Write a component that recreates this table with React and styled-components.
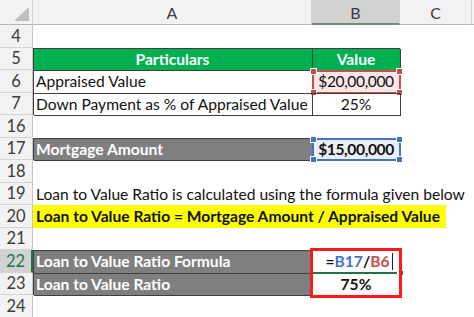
import React from 'react';
import styled, { createGlobalStyle, css } from 'styled-components';

const GlobalStyle = createGlobalStyle`
  html, body { margin: 0; padding: 0; background: #fff; }
  body { font-family: "Lato", "Open Sans", sans-serif; overflow: hidden; }
`;

const COLORS = {
  green: '#00b050',
  gray: '#7f7f7f',
  yellow: '#ffff00',
  border: '#3f3f3f',
  hdrBg: '#f2f2f2',
  hdrLine: '#d4d4d4',
  hdrSel: '#d2d2d2',
  excelGreen: '#217346',
  red: '#c0504d',
  blue: '#4472c4',
  annot: '#ff1a1a',
};

const Sheet = styled.div`
  display: grid;
  grid-template-columns: 33px 279px 88px 72px 1fr;
  grid-template-rows: 25px repeat(13, 22.5px);
  width: 474px;
  height: 317px;
  font-size: 15.6px;
  color: #111;
  overflow: hidden;
`;

const Corner = styled.div`
  background: ${COLORS.hdrBg};
  border-right: 1px solid ${COLORS.hdrLine};
  border-bottom: 1px solid #b5b5b5;
  position: relative;
  box-sizing: border-box;
  &::after {
    content: '';
    position: absolute;
    right: 3px;
    bottom: 3px;
    width: 0;
    height: 0;
    border-left: 15px solid transparent;
    border-bottom: 14px solid #bfbfbf;
  }
`;

const ColHead = styled.div`
  display: flex;
  align-items: center;
  justify-content: center;
  box-sizing: border-box;
  background: ${(p) => (p.selected ? COLORS.hdrSel : COLORS.hdrBg)};
  border-right: 1px solid ${COLORS.hdrLine};
  border-bottom: ${(p) => (p.selected ? '2px solid #6f8a78' : '1px solid #b5b5b5')};
  color: #3b3b3b;
  font-size: 16px;
  padding-top: 1px;
`;

const RowHead = styled.div`
  display: flex;
  align-items: center;
  justify-content: center;
  box-sizing: border-box;
  background: ${(p) => (p.selected ? COLORS.hdrSel : COLORS.hdrBg)};
  border-right: ${(p) => (p.selected ? `2px solid ${COLORS.excelGreen}` : '1px solid #c6c6c6')};
  border-bottom: 1px solid ${COLORS.hdrLine};
  color: ${(p) => (p.selected ? COLORS.excelGreen : '#3b3b3b')};
  font-size: 16.5px;
`;

const fills = {
  green: css`background: ${COLORS.green}; color: #fff; font-weight: 700;`,
  gray: css`background: ${COLORS.gray}; color: #fff; font-weight: 700;`,
};

const Cell = styled.div`
  position: relative;
  display: flex;
  align-items: center;
  justify-content: ${(p) => (p.center ? 'center' : 'flex-start')};
  padding: 0 3px;
  white-space: nowrap;
  box-sizing: border-box;
  font-weight: ${(p) => (p.bold ? 700 : 400)};
  grid-column: ${(p) => (p.span ? `span ${p.span}` : 'auto')};
  ${(p) => p.fill && fills[p.fill]}
  ${(p) =>
    p.boxed &&
    css`
      box-shadow: 1px 1px 0 ${COLORS.border}, inset 1px 1px 0 ${COLORS.border};
    `}
`;

const Highlight = styled.span`
  align-self: stretch;
  display: flex;
  align-items: center;
  margin-left: -3px;
  padding: 0 6px 0 3px;
  background: ${COLORS.yellow};
  font-weight: 700;
`;

const Selection = styled.div`
  position: absolute;
  inset: 0 -1px -1px 0;
  border: 2px solid ${(p) => p.color};
  background: ${(p) => p.tint};
  z-index: 0;
  pointer-events: none;
`;

const Handle = styled.i`
  position: absolute;
  width: 5px;
  height: 5px;
  background: ${(p) => p.color};
  border: 1px solid #fff;
  ${(p) => (p.top ? 'top: -4px;' : 'bottom: -4px;')}
  ${(p) => (p.left ? 'left: -4px;' : 'right: -4px;')}
`;

const CellText = styled.span`
  position: relative;
  z-index: 1;
  letter-spacing: -0.4px;
`;

const Formula = styled.span`
  font-weight: 700;
  position: relative;
  z-index: 1;
  padding-left: 6px;
  &::after {
    content: '';
    display: inline-block;
    width: 1px;
    height: 17px;
    margin-left: 2px;
    vertical-align: -3px;
    background: #222;
  }
`;

const Ref = styled.span`
  color: ${(p) => p.color};
`;

const ActiveLine = styled.div`
  position: absolute;
  left: 0;
  right: 3px;
  bottom: -1px;
  height: 2px;
  background: ${COLORS.excelGreen};
  &::after {
    content: '';
    position: absolute;
    right: -6px;
    top: -1px;
    width: 4px;
    height: 4px;
    background: ${COLORS.excelGreen};
  }
`;

// red box drawn over B22:B23 in the screenshot
const Annotation = styled.div`
  position: absolute;
  left: -2px;
  right: -2px;
  top: -2px;
  bottom: -25.5px;
  border: 3px solid ${COLORS.annot};
  pointer-events: none;
  z-index: 3;
`;

const Selected = ({ color, tint }) => (
  <Selection color={color} tint={tint}>
    <Handle color={color} top left />
    <Handle color={color} top />
    <Handle color={color} left />
    <Handle color={color} />
  </Selection>
);

const Blank = () => (
  <>
    <Cell />
    <Cell />
    <Cell />
    <Cell />
  </>
);

export default function App() {
  return (
    <>
      <GlobalStyle />
      <Sheet>
        <Corner />
        <ColHead>A</ColHead>
        <ColHead selected>B</ColHead>
        <ColHead>C</ColHead>
        <ColHead />

        <RowHead>4</RowHead>
        <Blank />

        <RowHead>5</RowHead>
        <Cell fill="green" boxed center>Particulars</Cell>
        <Cell fill="green" boxed center>Value</Cell>
        <Cell />
        <Cell />

        <RowHead>6</RowHead>
        <Cell boxed>Appraised Value</Cell>
        <Cell boxed center>
          <Selected color={COLORS.red} tint="#f9e6e6" />
          <CellText>$20,00,000</CellText>
        </Cell>
        <Cell />
        <Cell />

        <RowHead>7</RowHead>
        <Cell boxed>Down Payment as % of Appraised Value</Cell>
        <Cell boxed center>25%</Cell>
        <Cell />
        <Cell />

        <RowHead>16</RowHead>
        <Blank />

        <RowHead>17</RowHead>
        <Cell fill="gray" boxed>Mortgage Amount</Cell>
        <Cell boxed center bold>
          <Selected color={COLORS.blue} tint="#e9eef8" />
          <CellText>$15,00,000</CellText>
        </Cell>
        <Cell />
        <Cell />

        <RowHead>18</RowHead>
        <Blank />

        <RowHead>19</RowHead>
        <Cell span={3}>Loan to Value Ratio is calculated using the formula given below</Cell>
        <Cell />

        <RowHead>20</RowHead>
        <Cell span={3}>
          <Highlight>Loan to Value Ratio = Mortgage Amount / Appraised Value</Highlight>
        </Cell>
        <Cell />

        <RowHead>21</RowHead>
        <Blank />

        <RowHead selected>22</RowHead>
        <Cell fill="gray" boxed>Loan to Value Ratio Formula</Cell>
        <Cell center>
          <Formula>
            =<Ref color="#4472c4">B17</Ref>/<Ref color="#c0504d">B6</Ref>
          </Formula>
          <ActiveLine />
          <Annotation />
        </Cell>
        <Cell />
        <Cell />

        <RowHead>23</RowHead>
        <Cell fill="gray" boxed>Loan to Value Ratio</Cell>
        <Cell center bold>75%</Cell>
        <Cell />
        <Cell />

        <RowHead>24</RowHead>
        <Blank />
      </Sheet>
    </>
  );
}
